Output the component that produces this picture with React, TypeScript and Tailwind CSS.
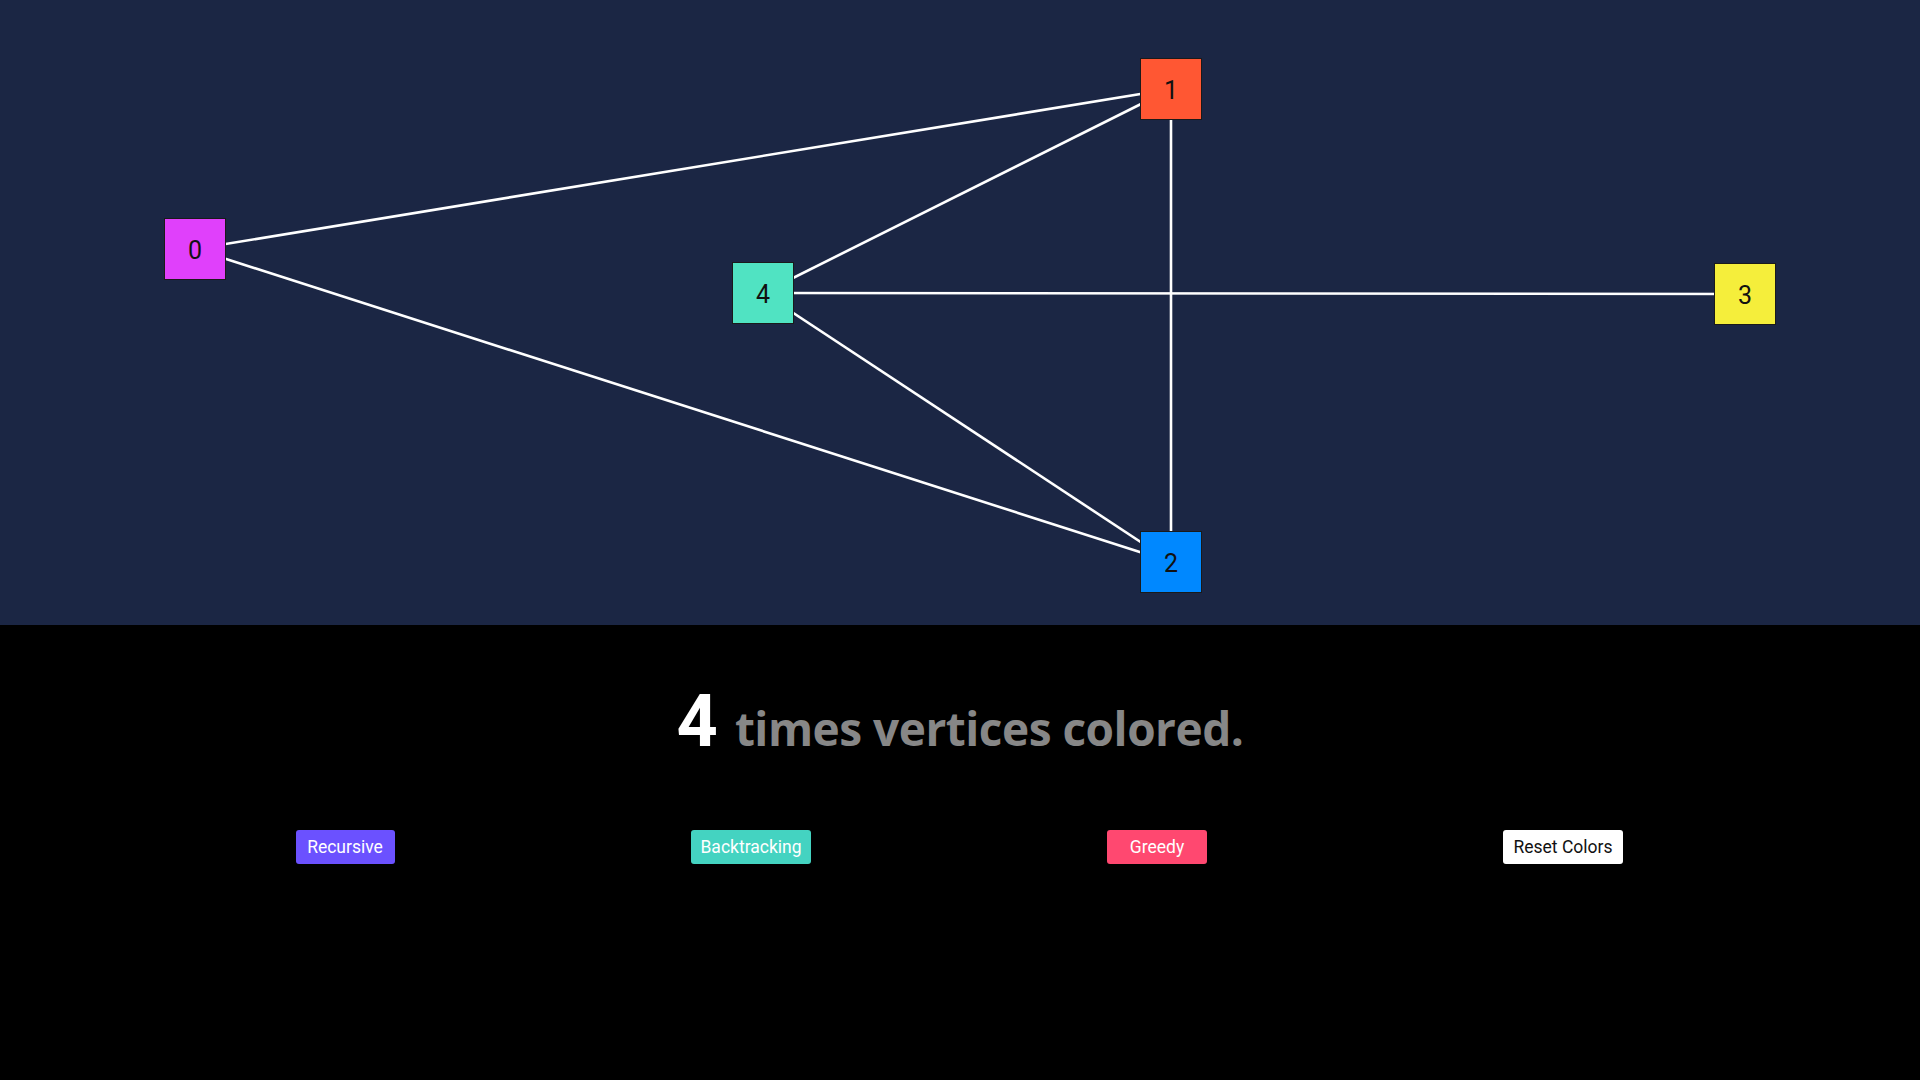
import React from "react";

type Node = { id: number; x: number; y: number; color: string };

const nodes: Node[] = [
  { id: 0, x: 195, y: 249, color: "#e040fb" },
  { id: 1, x: 1171, y: 89, color: "#ff5733" },
  { id: 2, x: 1171, y: 562, color: "#0088ff" },
  { id: 3, x: 1745, y: 294, color: "#f5ee3b" },
  { id: 4, x: 763, y: 293, color: "#50e3c2" },
];

const edges: [number, number][] = [
  [0, 1],
  [0, 2],
  [1, 4],
  [1, 2],
  [4, 2],
  [4, 3],
];

export default function App() {
  const byId = (i: number) => nodes.find((n) => n.id === i)!;
  return (
    <div className="w-[1920px] h-[1080px] bg-black overflow-hidden" style={{ fontFamily: "Roboto, sans-serif" }}>
      <div className="relative w-full h-[625px] bg-[#1b2644]">
        <svg className="absolute inset-0" width="1920" height="625">
          {edges.map(([a, b], i) => {
            const A = byId(a);
            const B = byId(b);
            return <line key={i} x1={A.x} y1={A.y} x2={B.x} y2={B.y} stroke="#ffffff" strokeWidth={2.6} />;
          })}
        </svg>
        {nodes.map((n) => (
          <div
            key={n.id}
            className="absolute w-[62px] h-[62px] border border-[#1a1a1a] flex items-center justify-center pt-[4px] text-[25px] text-[#111111]"
            style={{ left: n.x - 31, top: n.y - 31, backgroundColor: n.color }}
          >
            {n.id}
          </div>
        ))}
      </div>
      <div className="mt-[61px] flex items-baseline justify-center leading-none">
        <span className="text-[72px] font-bold text-white">4</span>
        <span className="ml-[17px] text-[46px] font-bold text-[#878787] tracking-[-0.5px]" style={{ fontFamily: "'Open Sans', sans-serif" }}>
          times vertices colored.
        </span>
      </div>
      <div className="mt-[72px] grid grid-cols-[repeat(4,406px)] pl-[142px] justify-items-center text-[17.5px]">
        <button className="w-[99px] h-[34px] rounded-[3px] bg-[#6b51ff] text-white">Recursive</button>
        <button className="w-[120px] h-[34px] rounded-[3px] bg-[#44d3c1] text-white">Backtracking</button>
        <button className="w-[100px] h-[34px] rounded-[3px] bg-[#ff4870] text-white">Greedy</button>
        <button className="w-[120px] h-[34px] rounded-[3px] bg-white text-[#111111]">Reset Colors</button>
      </div>
    </div>
  );
}
